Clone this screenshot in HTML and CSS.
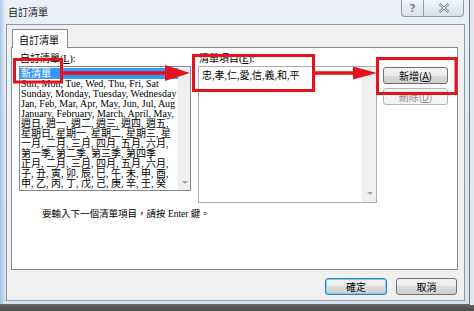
FILE: index.html
```html
<!DOCTYPE html>
<html>
<head>
<meta charset="utf-8">
<link rel="stylesheet" href="styles.css">
</head>
<body>
<div class="screen">
  <div class="window">
    <div class="titlebar">
      <span class="title">自訂清單</span>
      <div class="caption">
        <span class="cbtn help">?</span>
        <span class="cbtn close">
          <svg width="12" height="10" viewBox="0 0 12 10"><path d="M1.5 1 L10.5 9 M10.5 1 L1.5 9" stroke="#7d8794" stroke-width="2.4" fill="none"/><path d="M1.5 1 L10.5 9 M10.5 1 L1.5 9" stroke="#f4f6f9" stroke-width="0.9" fill="none"/></svg>
        </span>
      </div>
    </div>
    <div class="client">
      <div class="tabs"><span class="tab">自訂清單</span></div>
      <div class="page">
        <div class="cols">
          <div class="col-left">
            <div class="label">自訂清單(<u>L</u>):</div>
            <div class="listbox">
              <div class="items">
                <div class="item sel">新清單</div>
                <div class="item">Sun, Mon, Tue, Wed, Thu, Fri, Sat</div>
                <div class="item">Sunday, Monday, Tuesday, Wednesday</div>
                <div class="item">Jan, Feb, Mar, Apr, May, Jun, Jul, Aug</div>
                <div class="item">January, February, March, April, May,</div>
                <div class="item">週日, 週一, 週二, 週三, 週四, 週五,</div>
                <div class="item">星期日, 星期一, 星期二, 星期三, 星</div>
                <div class="item">一月, 二月, 三月, 四月, 五月, 六月,</div>
                <div class="item">第一季, 第二季, 第三季, 第四季</div>
                <div class="item">正月, 二月, 三月, 四月, 五月, 六月,</div>
                <div class="item">子, 丑, 寅, 卯, 辰, 巳, 午, 未, 申, 酉,</div>
                <div class="item">甲, 乙, 丙, 丁, 戊, 己, 庚, 辛, 壬, 癸</div>
              </div>
              <div class="vscroll"><span class="down"></span></div>
            </div>
          </div>
          <div class="col-mid">
            <div class="label">清單項目(<u>E</u>):</div>
            <div class="textbox">
              <div class="tb-text">忠,孝,仁,愛,信,義,和,平</div>
              <div class="vscroll wide"><span class="down"></span></div>
            </div>
          </div>
          <div class="col-btns">
            <button class="btn">新增(<u>A</u>)</button>
            <button class="btn disabled">刪除(<u>D</u>)</button>
          </div>
        </div>
        <p class="hint">要輸入下一個清單項目，請按 Enter 鍵。</p>
      </div>
      <div class="footer">
        <button class="btn ok">確定</button>
        <button class="btn cancel">取消</button>
      </div>
    </div>
    <svg class="annot" width="474" height="311" viewBox="0 0 474 311">
      <g fill="none" stroke="#e3121b" stroke-width="3">
        <rect x="14.5" y="59.5" width="47" height="22.5"/>
        <rect x="193.5" y="55.5" width="120" height="35"/>
        <rect x="377.5" y="58.5" width="78.5" height="35"/>
        <line x1="63" y1="73" x2="168" y2="73" stroke-width="3.5"/>
        <line x1="315" y1="73" x2="356" y2="73" stroke-width="3.5"/>
      </g>
      <g fill="#e3121b">
        <polygon points="165,65 165,81 190,73"/>
        <polygon points="353,66.5 353,79.5 377,73"/>
      </g>
    </svg>
  </div>
  <div class="shadow-strip"></div>
</div>
</body>
</html>
```
FILE: styles.css
```css
* { box-sizing: border-box; }
html, body { margin: 0; padding: 0; }
body {
  width: 474px;
  height: 311px;
  overflow: hidden;
  background: #e4e8ec;
  font-family: "Liberation Serif", "Noto Sans CJK TC", serif;
  color: #000;
}
.screen {
  display: grid;
  grid-template-rows: 305px 6px;
  height: 311px;
}
.window {
  position: relative;
  width: 470px;
  display: flex;
  flex-direction: column;
  background:
    linear-gradient(90deg, rgba(120,165,215,0.55) 0, rgba(120,165,215,0) 5px),
    linear-gradient(180deg, #eaf0f6 0, #e0e8f1 40%, #d6e2ef 100%);
  border-right: 1px solid #6f7a88;
  border-bottom: 1px solid #5e6670;
}
.shadow-strip {
  background: linear-gradient(180deg, #5f5f5f 0, #4d4d4d 100%);
}

/* title bar */
.titlebar {
  height: 24px;
  display: flex;
  align-items: flex-start;
}
.title {
  margin: 5px 0 0 8px;
  font-family: "Noto Sans CJK TC", sans-serif;
  font-size: 10px;
  line-height: 14px;
  color: #1c1c1c;
}
.caption {
  margin-left: auto;
  margin-right: 5px;
  display: flex;
}
.cbtn {
  height: 17px;
  border: 1px solid #8d9bb0;
  border-top: none;
  background: linear-gradient(180deg, #f1f5f9 0, #e2e9f1 50%, #d9e2ec 100%);
  display: flex;
  align-items: center;
  justify-content: center;
  font-family: "DejaVu Sans", sans-serif;
  font-weight: bold;
  font-size: 11px;
  color: #7d8794;
}
.help { width: 23px; border-radius: 0 0 0 4px; }
.close { width: 40px; border-left: none; border-radius: 0 0 4px 0; }

/* client area */
.client {
  margin-left: 6px;
  width: 459px;
  height: 277px;
  border: 1px solid #8b9ab0;
  background: #f0f0f0;
  padding: 4px 6px 0 4px;
}
.tabs { display: flex; padding-left: 1px; }
.tab {
  position: relative;
  z-index: 1;
  width: 56px;
  height: 19px;
  margin-bottom: -1px;
  padding: 3px 0 0 6px;
  border: 1px solid #898c95;
  border-bottom: none;
  background: #fff;
  font-family: "Noto Sans CJK TC", sans-serif;
  font-size: 10px;
  line-height: 14px;
}
.page {
  height: 223px;
  border: 1px solid #898c95;
  background: #fff;
  padding: 4px 0 0 7px;
}
.cols { display: flex; align-items: flex-start; }
.col-left { width: 172px; }
.col-mid { width: 179px; margin-left: 7px; }
.col-btns {
  width: 65px;
  margin-left: 6px;
  padding-top: 15px;
  display: flex;
  flex-direction: column;
  gap: 4px;
}
.label {
  height: 14px;
  font-size: 10px;
  line-height: 14px;
  padding-left: 1px;
}
.label u, .btn u { text-decoration: underline; }

.listbox {
  height: 125px;
  border: 1px solid #828790;
  background: #fff;
  display: flex;
}
.items {
  flex: 1;
  min-width: 0;
  overflow: hidden;
  padding-top: 1px;
  white-space: nowrap;
  font-size: 10px;
  line-height: 10px;
}
.item { height: 10px; padding-left: 1px; }
.item.sel { height: 11px; background: #3399ff; color: #fff; line-height: 11px; }

.vscroll {
  width: 12px;
  background: #f0f0f0;
  border-left: 1px solid #e8e8e8;
  display: flex;
  flex-direction: column;
  justify-content: flex-end;
  align-items: center;
  padding-bottom: 6px;
}
.vscroll.wide { width: 14px; padding-bottom: 7px; }
.down {
  width: 0;
  height: 0;
  border-left: 3px solid transparent;
  border-right: 3px solid transparent;
  border-top: 3px solid #a4a4a4;
}

.textbox {
  height: 137px;
  border: 1px solid #abadb3;
  background: #fff;
  display: flex;
}
.tb-text {
  flex: 1;
  padding: 3px 0 0 3px;
  font-size: 10px;
  line-height: 12px;
  white-space: nowrap;
}

.btn {
  display: block;
  height: 17px;
  margin: 0;
  padding: 0;
  border: 1px solid #707070;
  border-radius: 3px;
  background: linear-gradient(180deg, #f2f2f2 0, #ebebeb 50%, #dddddd 50%, #cfcfcf 100%);
  font-family: "Noto Sans CJK TC", sans-serif;
  font-size: 10px;
  line-height: 15px;
  color: #000;
  text-align: center;
}
.col-btns .btn { width: 65px; }
.btn.disabled {
  border-color: #b3b7ba;
  background: #f4f4f4;
  color: #8d8d8d;
}
.hint {
  margin: 5px 0 0 23px;
  font-size: 9.5px;
  line-height: 12px;
}
.footer {
  display: flex;
  justify-content: flex-end;
  gap: 9px;
  margin-top: 8px;
  padding-right: 1px;
}
.btn.ok {
  width: 62px;
  border-color: #3c7fb1;
  box-shadow: inset 0 0 0 1px #6fd0f3;
}
.btn.cancel { width: 61px; }

.annot {
  position: absolute;
  left: 0;
  top: 0;
  pointer-events: none;
}
```
